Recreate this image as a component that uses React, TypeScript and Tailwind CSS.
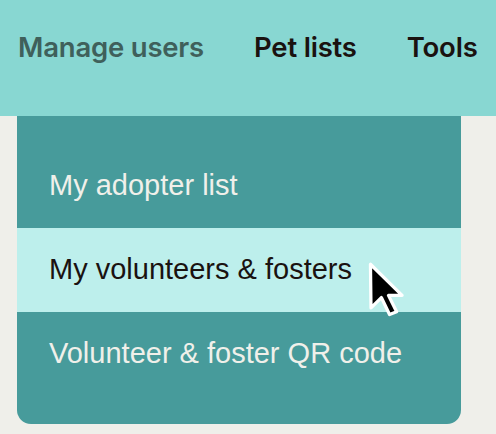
import React from 'react';

const NAV = ['Manage users', 'Pet lists', 'Tools'];

const ITEMS = [
  { label: 'My adopter list', active: false },
  { label: 'My volunteers & fosters', active: true },
  { label: 'Volunteer & foster QR code', active: false },
];

function Cursor() {
  return (
    <svg
      className="absolute left-[350px] top-[33px]"
      width="44"
      height="60"
      viewBox="-3 -3 40 55"
    >
      <path
        d="M0 0 L0.5 40 L10 30.5 L17.5 46 L24 43.5 L16.5 28.5 L29 28.5 Z"
        fill="#000"
        stroke="#fff"
        strokeWidth="3"
        strokeLinejoin="round"
      />
    </svg>
  );
}

export default function App() {
  return (
    <div className="w-[496px] h-[434px] bg-[#efefea] overflow-hidden font-['Liberation_Sans',Arial,sans-serif]">
      <header className="h-[116px] bg-[#88d7d2] flex items-start gap-[50px] pl-[18px] pt-[32px]">
        {NAV.map((n, i) => (
          <span
            key={n}
            className={`font-['Inter',sans-serif] font-semibold text-[27.5px] leading-[30px] tracking-[-0.2px] ${
              i === 0 ? 'text-[#3f605b]' : 'text-[#1a1210]'
            }`}
          >
            {n}
          </span>
        ))}
      </header>

      <div className="ml-[17px] w-[444px] bg-[#479b9b] rounded-b-[14px] pt-[28px] pb-[28px]">
        {ITEMS.map((item) => (
          <div
            key={item.label}
            className={`relative h-[84px] flex items-center pl-[32px] text-[29px] ${
              item.active ? 'bg-[#bdefec] text-[#1a1210]' : 'text-[#f0f0ea]'
            }`}
          >
            {item.label}
            {item.active && <Cursor />}
          </div>
        ))}
      </div>
    </div>
  );
}
